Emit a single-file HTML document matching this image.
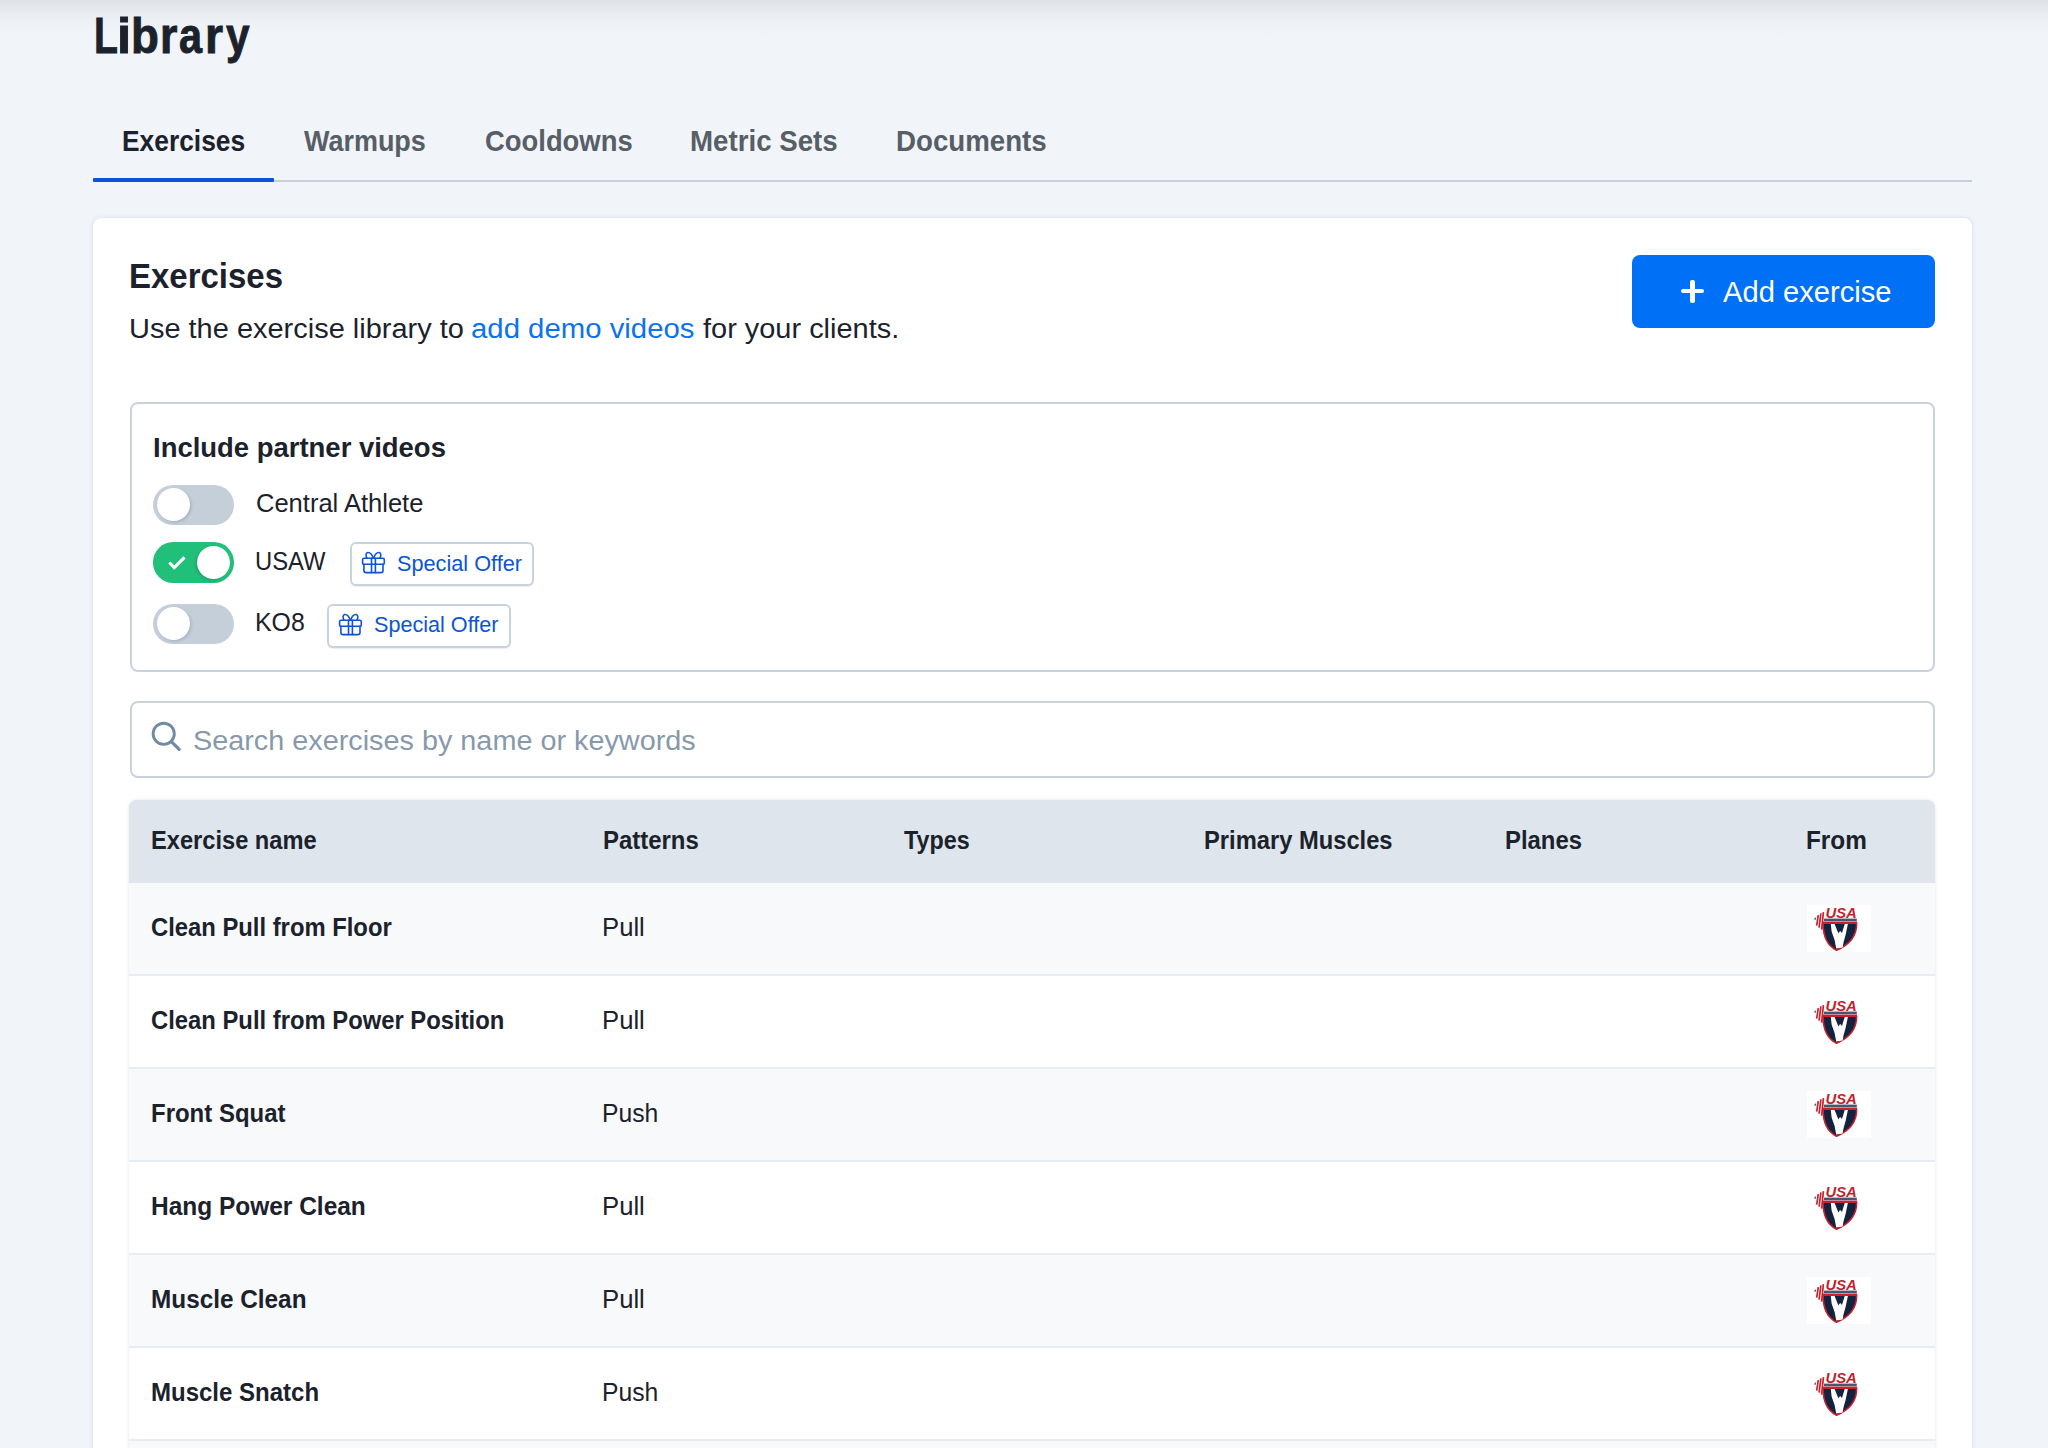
<!DOCTYPE html>
<html><head><meta charset="utf-8"><title>Library</title>
<style>
html,body{margin:0;padding:0;}
body{width:2048px;height:1448px;overflow:hidden;position:relative;
 background:linear-gradient(to bottom,#dfe2e5 0px,#e9ecf0 14px,#eef1f6 24px,#f1f4f9 36px,#f1f4f9 100%);
 font-family:"Liberation Sans",sans-serif;}
.abs{position:absolute;}
.t{position:absolute;white-space:nowrap;line-height:1;transform-origin:0 0;}
.card{background:#fff;border-radius:8px;box-shadow:0 0 1px rgba(40,50,60,0.14),0 0 5px rgba(40,50,60,0.10);}
.knob{background:#fff;border-radius:50%;box-shadow:1.5px 1.5px 3px rgba(30,40,60,0.16);}
.badge{box-sizing:border-box;border:2px solid #c9d3de;border-radius:6px;background:#fff;box-shadow:0 1px 1px rgba(30,40,60,0.08);}
.tbl{border-radius:8px;box-shadow:0 0 1px rgba(30,40,50,0.16),0 0 4px rgba(30,40,50,0.08);}
</style></head>
<body>
<div class="t" style="left:93.93px;top:11.26px;font-size:49.42px;font-weight:700;color:#1b222b;transform:scaleX(0.7926);-webkit-text-stroke:0.9px #1b222b;">L</div>
<div class="t" style="left:116.89px;top:11.26px;font-size:49.42px;font-weight:700;color:#1b222b;transform:scaleX(1.0324);-webkit-text-stroke:0.9px #1b222b;">i</div>
<div class="t" style="left:130.64px;top:11.26px;font-size:49.42px;font-weight:700;color:#1b222b;transform:scaleX(0.9236);-webkit-text-stroke:0.9px #1b222b;">b</div>
<div class="t" style="left:159.50px;top:11.26px;font-size:49.42px;font-weight:700;color:#1b222b;transform:scaleX(0.9063);-webkit-text-stroke:0.9px #1b222b;">r</div>
<div class="t" style="left:178.84px;top:11.26px;font-size:49.42px;font-weight:700;color:#1b222b;transform:scaleX(0.8387);-webkit-text-stroke:0.9px #1b222b;">a</div>
<div class="t" style="left:204.79px;top:11.26px;font-size:49.42px;font-weight:700;color:#1b222b;transform:scaleX(0.9392);-webkit-text-stroke:0.9px #1b222b;">r</div>
<div class="t" style="left:226.12px;top:11.26px;font-size:49.42px;font-weight:700;color:#1b222b;transform:scaleX(0.8572);-webkit-text-stroke:0.9px #1b222b;">y</div>
<div class="t" style="left:121.64px;top:125.57px;font-size:29.80px;font-weight:700;color:#1b222b;transform:scaleX(0.8848);">Exercises</div>
<div class="t" style="left:303.97px;top:125.57px;font-size:29.80px;font-weight:700;color:#575e66;transform:scaleX(0.9048);">Warmups</div>
<div class="t" style="left:485.18px;top:125.57px;font-size:29.80px;font-weight:700;color:#575e66;transform:scaleX(0.9196);">Cooldowns</div>
<div class="t" style="left:690.35px;top:125.57px;font-size:29.80px;font-weight:700;color:#575e66;transform:scaleX(0.9290);">Metric Sets</div>
<div class="t" style="left:895.65px;top:125.57px;font-size:29.80px;font-weight:700;color:#575e66;transform:scaleX(0.9287);">Documents</div>
<div class="abs" style="left:93px;top:180px;width:1879px;height:2px;background:#c6cfd9"></div>
<div class="abs" style="left:93px;top:178px;width:181px;height:4px;background:#0a52d6;border-radius:1px"></div>
<div class="abs card" style="left:93px;top:218px;width:1879px;height:1300px"></div>
<div class="t" style="left:129.10px;top:258.87px;font-size:35.47px;font-weight:700;color:#1b222b;transform:scaleX(0.9294);">Exercises</div>
<div class="t" style="left:129.06px;top:314.72px;font-size:27.62px;font-weight:400;color:#1b222b;transform:scaleX(1.0492);">Use the exercise library to</div>
<div class="t" style="left:471.15px;top:314.72px;font-size:27.62px;font-weight:400;color:#0d72ef;transform:scaleX(1.0626);">add demo videos</div>
<div class="t" style="left:703.29px;top:314.72px;font-size:27.62px;font-weight:400;color:#1b222b;transform:scaleX(1.0481);">for your clients.</div>
<div class="abs" style="left:1632px;top:255px;width:303px;height:73px;background:#0070f6;border-radius:8px"></div>
<div class="abs" style="left:1681px;top:288.8px;width:23px;height:4.6px;background:#fff;border-radius:2px"></div>
<div class="abs" style="left:1690.2px;top:279.6px;width:4.6px;height:23px;background:#fff;border-radius:2px"></div>
<div class="t" style="left:1722.94px;top:276.85px;font-size:29.94px;font-weight:400;color:#ffffff;transform:scaleX(0.9738);">Add exercise</div>
<div class="abs" style="left:130px;top:402px;width:1805px;height:270px;box-sizing:border-box;border:2px solid #c9d3de;border-radius:8px"></div>
<div class="t" style="left:152.66px;top:432.78px;font-size:28.49px;font-weight:700;color:#1b222b;transform:scaleX(0.9638);">Include partner videos</div>
<div class="abs" style="left:153px;top:484.5px;width:81px;height:40.5px;border-radius:20.25px;background:#c5cfda"></div><div class="abs knob" style="left:156.7px;top:487.9px;width:33.2px;height:33.2px"></div>
<div class="abs" style="left:153px;top:542px;width:81px;height:40.5px;border-radius:20.25px;background:#20c07a"></div><div class="abs knob" style="left:197.3px;top:545.6px;width:33.2px;height:33.2px;box-shadow:-1.5px 1.5px 3px rgba(20,60,40,0.2)"></div><svg class="abs" style="left:167px;top:554px" width="20" height="16" viewBox="0 0 20 16"><path d="M2.3 8.5 L7.3 13.5 L17.5 3.3" fill="none" stroke="#fff" stroke-width="3.1" stroke-linecap="butt" stroke-linejoin="miter"/></svg>
<div class="abs" style="left:153px;top:603.5px;width:81px;height:40.5px;border-radius:20.25px;background:#c5cfda"></div><div class="abs knob" style="left:156.7px;top:606.9px;width:33.2px;height:33.2px"></div>
<div class="t" style="left:256.10px;top:491.14px;font-size:25.58px;font-weight:400;color:#1b222b;transform:scaleX(0.9977);">Central Athlete</div>
<div class="t" style="left:255.26px;top:549.14px;font-size:25.58px;font-weight:400;color:#1b222b;transform:scaleX(0.9306);">USAW</div>
<div class="t" style="left:255.06px;top:610.14px;font-size:25.58px;font-weight:400;color:#1b222b;transform:scaleX(0.9734);">KO8</div>
<div class="abs badge" style="left:350.2px;top:542px;width:184px;height:44px"></div><svg class="abs" style="left:361.0px;top:550px" width="25" height="25" viewBox="0 0 25 25"><g fill="none" stroke="#0b55d4" stroke-width="1.6" stroke-linejoin="round" stroke-linecap="round"><rect x="1.6" y="8.3" width="21.7" height="6" rx="1.4"/><path d="M2.9 14.3 V20.4 Q2.9 22.6 5.1 22.6 H19.8 Q22 22.6 22 20.4 V14.3"/><path d="M10.5 8.3 V22.6 M14.4 8.3 V22.6"/><path d="M12.45 8.2 C11 4.5 8.5 2.2 6.6 2.5 C4.6 2.9 4.6 6.5 6.2 8.2"/><path d="M12.45 8.2 C13.9 4.5 16.4 2.2 18.3 2.5 C20.3 2.9 20.3 6.5 18.7 8.2"/></g></svg>
<div class="t" style="left:396.91px;top:552.85px;font-size:22.38px;font-weight:400;color:#0b55d4;transform:scaleX(0.9696);">Special Offer</div>
<div class="abs badge" style="left:327.2px;top:603.5px;width:184px;height:44px"></div><svg class="abs" style="left:338.0px;top:611.5px" width="25" height="25" viewBox="0 0 25 25"><g fill="none" stroke="#0b55d4" stroke-width="1.6" stroke-linejoin="round" stroke-linecap="round"><rect x="1.6" y="8.3" width="21.7" height="6" rx="1.4"/><path d="M2.9 14.3 V20.4 Q2.9 22.6 5.1 22.6 H19.8 Q22 22.6 22 20.4 V14.3"/><path d="M10.5 8.3 V22.6 M14.4 8.3 V22.6"/><path d="M12.45 8.2 C11 4.5 8.5 2.2 6.6 2.5 C4.6 2.9 4.6 6.5 6.2 8.2"/><path d="M12.45 8.2 C13.9 4.5 16.4 2.2 18.3 2.5 C20.3 2.9 20.3 6.5 18.7 8.2"/></g></svg>
<div class="t" style="left:374.22px;top:614.35px;font-size:22.38px;font-weight:400;color:#0b55d4;transform:scaleX(0.9657);">Special Offer</div>
<div class="abs" style="left:130px;top:700.8px;width:1805px;height:77.2px;box-sizing:border-box;border:2px solid #c9d3de;border-radius:8px"></div>
<svg class="abs" style="left:148px;top:718px" width="36" height="36" viewBox="0 0 36 36"><circle cx="15.7" cy="15.8" r="10.6" fill="none" stroke="#6f8ba6" stroke-width="2.9"/><path d="M23.6 23.8 L31.2 31.4" stroke="#6f8ba6" stroke-width="3.2" stroke-linecap="round"/></svg>
<div class="t" style="left:193.09px;top:725.60px;font-size:28.34px;font-weight:400;color:#8799ab;transform:scaleX(1.0168);">Search exercises by name or keywords</div>
<div class="abs tbl" style="left:129px;top:800px;width:1806px;height:700px"></div>
<div class="abs" style="left:129px;top:800px;width:1806px;height:83px;background:#dfe5ec;border-radius:8px 8px 0 0"></div>
<div class="t" style="left:151.02px;top:828.26px;font-size:25.44px;font-weight:700;color:#1b222b;transform:scaleX(0.9294);">Exercise name</div>
<div class="t" style="left:602.60px;top:828.26px;font-size:25.44px;font-weight:700;color:#1b222b;transform:scaleX(0.9401);">Patterns</div>
<div class="t" style="left:904.34px;top:828.26px;font-size:25.44px;font-weight:700;color:#1b222b;transform:scaleX(0.9157);">Types</div>
<div class="t" style="left:1204.41px;top:828.26px;font-size:25.44px;font-weight:700;color:#1b222b;transform:scaleX(0.9326);">Primary Muscles</div>
<div class="t" style="left:1505.30px;top:828.26px;font-size:25.44px;font-weight:700;color:#1b222b;transform:scaleX(0.9386);">Planes</div>
<div class="t" style="left:1805.97px;top:828.26px;font-size:25.44px;font-weight:700;color:#1b222b;transform:scaleX(0.9567);">From</div>
<div class="abs" style="left:129px;top:883px;width:1806px;height:93px;background:#f8f9fb"></div>
<div class="abs" style="left:129px;top:974px;width:1806px;height:2px;background:#e8edf2"></div>
<div class="t" style="left:151.42px;top:915.01px;font-size:25.15px;font-weight:700;color:#1b222b;transform:scaleX(0.9468);">Clean Pull from Floor</div>
<div class="t" style="left:601.89px;top:915.01px;font-size:25.15px;font-weight:400;color:#1b222b;transform:scaleX(1.0214);">Pull</div>
<svg class="abs" style="left:1807px;top:905px" width="64" height="47" viewBox="0 0 64 47"><rect width="64" height="47" fill="#fff"/><path d="M16.2 18.2 L49.6 18.2 C49.8 30 43 39.5 29.5 45.2 C19.5 40 16 30 16.2 18.2 Z" fill="#13223e" stroke="#c8202f" stroke-width="1.6"/><path d="M23.8 18.9 L27.6 18.9 L30.6 26.5 L31.6 28.4 Q32.6 25.6 34 26.6 L34.9 28.2 L37.7 18.9 L40.9 18.9 L38.6 30 L36.6 37 L35.6 42.6 L29.2 43.6 L27.6 35 L24.6 26.5 Z" fill="#fff"/><rect x="16" y="16.6" width="34" height="1.9" fill="#c8202f"/><rect x="17" y="13.6" width="32.8" height="2.6" fill="#1d2c4e" opacity="0.8"/><text x="18.4" y="12.9" font-family="Liberation Sans" font-weight="700" font-style="italic" font-size="14" fill="#c41f2e" textLength="31.4" lengthAdjust="spacingAndGlyphs">USA</text><path d="M9.7 20.6 L11.3 10.2 M12.1 22.6 L13.9 8.4 M14.6 24.6 L16.4 7.2" stroke="#c8202f" stroke-width="1.7" fill="none"/><path d="M7.2 14.4 L8.3 12 L9 14.4 Z" fill="#13223e"/></svg>
<div class="abs" style="left:129px;top:976px;width:1806px;height:93px;background:#ffffff"></div>
<div class="abs" style="left:129px;top:1067px;width:1806px;height:2px;background:#e8edf2"></div>
<div class="t" style="left:151.42px;top:1008.01px;font-size:25.15px;font-weight:700;color:#1b222b;transform:scaleX(0.9472);">Clean Pull from Power Position</div>
<div class="t" style="left:601.89px;top:1008.01px;font-size:25.15px;font-weight:400;color:#1b222b;transform:scaleX(1.0214);">Pull</div>
<svg class="abs" style="left:1807px;top:998px" width="64" height="47" viewBox="0 0 64 47"><rect width="64" height="47" fill="#fff"/><path d="M16.2 18.2 L49.6 18.2 C49.8 30 43 39.5 29.5 45.2 C19.5 40 16 30 16.2 18.2 Z" fill="#13223e" stroke="#c8202f" stroke-width="1.6"/><path d="M23.8 18.9 L27.6 18.9 L30.6 26.5 L31.6 28.4 Q32.6 25.6 34 26.6 L34.9 28.2 L37.7 18.9 L40.9 18.9 L38.6 30 L36.6 37 L35.6 42.6 L29.2 43.6 L27.6 35 L24.6 26.5 Z" fill="#fff"/><rect x="16" y="16.6" width="34" height="1.9" fill="#c8202f"/><rect x="17" y="13.6" width="32.8" height="2.6" fill="#1d2c4e" opacity="0.8"/><text x="18.4" y="12.9" font-family="Liberation Sans" font-weight="700" font-style="italic" font-size="14" fill="#c41f2e" textLength="31.4" lengthAdjust="spacingAndGlyphs">USA</text><path d="M9.7 20.6 L11.3 10.2 M12.1 22.6 L13.9 8.4 M14.6 24.6 L16.4 7.2" stroke="#c8202f" stroke-width="1.7" fill="none"/><path d="M7.2 14.4 L8.3 12 L9 14.4 Z" fill="#13223e"/></svg>
<div class="abs" style="left:129px;top:1069px;width:1806px;height:93px;background:#f8f9fb"></div>
<div class="abs" style="left:129px;top:1160px;width:1806px;height:2px;background:#e8edf2"></div>
<div class="t" style="left:150.80px;top:1101.01px;font-size:25.15px;font-weight:700;color:#1b222b;transform:scaleX(0.9534);">Front Squat</div>
<div class="t" style="left:601.97px;top:1101.01px;font-size:25.15px;font-weight:400;color:#1b222b;transform:scaleX(0.9829);">Push</div>
<svg class="abs" style="left:1807px;top:1091px" width="64" height="47" viewBox="0 0 64 47"><rect width="64" height="47" fill="#fff"/><path d="M16.2 18.2 L49.6 18.2 C49.8 30 43 39.5 29.5 45.2 C19.5 40 16 30 16.2 18.2 Z" fill="#13223e" stroke="#c8202f" stroke-width="1.6"/><path d="M23.8 18.9 L27.6 18.9 L30.6 26.5 L31.6 28.4 Q32.6 25.6 34 26.6 L34.9 28.2 L37.7 18.9 L40.9 18.9 L38.6 30 L36.6 37 L35.6 42.6 L29.2 43.6 L27.6 35 L24.6 26.5 Z" fill="#fff"/><rect x="16" y="16.6" width="34" height="1.9" fill="#c8202f"/><rect x="17" y="13.6" width="32.8" height="2.6" fill="#1d2c4e" opacity="0.8"/><text x="18.4" y="12.9" font-family="Liberation Sans" font-weight="700" font-style="italic" font-size="14" fill="#c41f2e" textLength="31.4" lengthAdjust="spacingAndGlyphs">USA</text><path d="M9.7 20.6 L11.3 10.2 M12.1 22.6 L13.9 8.4 M14.6 24.6 L16.4 7.2" stroke="#c8202f" stroke-width="1.7" fill="none"/><path d="M7.2 14.4 L8.3 12 L9 14.4 Z" fill="#13223e"/></svg>
<div class="abs" style="left:129px;top:1162px;width:1806px;height:93px;background:#ffffff"></div>
<div class="abs" style="left:129px;top:1253px;width:1806px;height:2px;background:#e8edf2"></div>
<div class="t" style="left:150.76px;top:1194.01px;font-size:25.15px;font-weight:700;color:#1b222b;transform:scaleX(0.9732);">Hang Power Clean</div>
<div class="t" style="left:601.89px;top:1194.01px;font-size:25.15px;font-weight:400;color:#1b222b;transform:scaleX(1.0214);">Pull</div>
<svg class="abs" style="left:1807px;top:1184px" width="64" height="47" viewBox="0 0 64 47"><rect width="64" height="47" fill="#fff"/><path d="M16.2 18.2 L49.6 18.2 C49.8 30 43 39.5 29.5 45.2 C19.5 40 16 30 16.2 18.2 Z" fill="#13223e" stroke="#c8202f" stroke-width="1.6"/><path d="M23.8 18.9 L27.6 18.9 L30.6 26.5 L31.6 28.4 Q32.6 25.6 34 26.6 L34.9 28.2 L37.7 18.9 L40.9 18.9 L38.6 30 L36.6 37 L35.6 42.6 L29.2 43.6 L27.6 35 L24.6 26.5 Z" fill="#fff"/><rect x="16" y="16.6" width="34" height="1.9" fill="#c8202f"/><rect x="17" y="13.6" width="32.8" height="2.6" fill="#1d2c4e" opacity="0.8"/><text x="18.4" y="12.9" font-family="Liberation Sans" font-weight="700" font-style="italic" font-size="14" fill="#c41f2e" textLength="31.4" lengthAdjust="spacingAndGlyphs">USA</text><path d="M9.7 20.6 L11.3 10.2 M12.1 22.6 L13.9 8.4 M14.6 24.6 L16.4 7.2" stroke="#c8202f" stroke-width="1.7" fill="none"/><path d="M7.2 14.4 L8.3 12 L9 14.4 Z" fill="#13223e"/></svg>
<div class="abs" style="left:129px;top:1255px;width:1806px;height:93px;background:#f8f9fb"></div>
<div class="abs" style="left:129px;top:1346px;width:1806px;height:2px;background:#e8edf2"></div>
<div class="t" style="left:150.77px;top:1287.01px;font-size:25.15px;font-weight:700;color:#1b222b;transform:scaleX(0.9678);">Muscle Clean</div>
<div class="t" style="left:601.89px;top:1287.01px;font-size:25.15px;font-weight:400;color:#1b222b;transform:scaleX(1.0214);">Pull</div>
<svg class="abs" style="left:1807px;top:1277px" width="64" height="47" viewBox="0 0 64 47"><rect width="64" height="47" fill="#fff"/><path d="M16.2 18.2 L49.6 18.2 C49.8 30 43 39.5 29.5 45.2 C19.5 40 16 30 16.2 18.2 Z" fill="#13223e" stroke="#c8202f" stroke-width="1.6"/><path d="M23.8 18.9 L27.6 18.9 L30.6 26.5 L31.6 28.4 Q32.6 25.6 34 26.6 L34.9 28.2 L37.7 18.9 L40.9 18.9 L38.6 30 L36.6 37 L35.6 42.6 L29.2 43.6 L27.6 35 L24.6 26.5 Z" fill="#fff"/><rect x="16" y="16.6" width="34" height="1.9" fill="#c8202f"/><rect x="17" y="13.6" width="32.8" height="2.6" fill="#1d2c4e" opacity="0.8"/><text x="18.4" y="12.9" font-family="Liberation Sans" font-weight="700" font-style="italic" font-size="14" fill="#c41f2e" textLength="31.4" lengthAdjust="spacingAndGlyphs">USA</text><path d="M9.7 20.6 L11.3 10.2 M12.1 22.6 L13.9 8.4 M14.6 24.6 L16.4 7.2" stroke="#c8202f" stroke-width="1.7" fill="none"/><path d="M7.2 14.4 L8.3 12 L9 14.4 Z" fill="#13223e"/></svg>
<div class="abs" style="left:129px;top:1348px;width:1806px;height:93px;background:#ffffff"></div>
<div class="abs" style="left:129px;top:1439px;width:1806px;height:2px;background:#e8edf2"></div>
<div class="t" style="left:150.79px;top:1380.01px;font-size:25.15px;font-weight:700;color:#1b222b;transform:scaleX(0.9547);">Muscle Snatch</div>
<div class="t" style="left:601.97px;top:1380.01px;font-size:25.15px;font-weight:400;color:#1b222b;transform:scaleX(0.9829);">Push</div>
<svg class="abs" style="left:1807px;top:1370px" width="64" height="47" viewBox="0 0 64 47"><rect width="64" height="47" fill="#fff"/><path d="M16.2 18.2 L49.6 18.2 C49.8 30 43 39.5 29.5 45.2 C19.5 40 16 30 16.2 18.2 Z" fill="#13223e" stroke="#c8202f" stroke-width="1.6"/><path d="M23.8 18.9 L27.6 18.9 L30.6 26.5 L31.6 28.4 Q32.6 25.6 34 26.6 L34.9 28.2 L37.7 18.9 L40.9 18.9 L38.6 30 L36.6 37 L35.6 42.6 L29.2 43.6 L27.6 35 L24.6 26.5 Z" fill="#fff"/><rect x="16" y="16.6" width="34" height="1.9" fill="#c8202f"/><rect x="17" y="13.6" width="32.8" height="2.6" fill="#1d2c4e" opacity="0.8"/><text x="18.4" y="12.9" font-family="Liberation Sans" font-weight="700" font-style="italic" font-size="14" fill="#c41f2e" textLength="31.4" lengthAdjust="spacingAndGlyphs">USA</text><path d="M9.7 20.6 L11.3 10.2 M12.1 22.6 L13.9 8.4 M14.6 24.6 L16.4 7.2" stroke="#c8202f" stroke-width="1.7" fill="none"/><path d="M7.2 14.4 L8.3 12 L9 14.4 Z" fill="#13223e"/></svg>
<div class="abs" style="left:129px;top:1441px;width:1806px;height:93px;background:#f8f9fb"></div>
<div class="abs" style="left:129px;top:1532px;width:1806px;height:2px;background:#e8edf2"></div>
<svg class="abs" style="left:1807px;top:1463px" width="64" height="47" viewBox="0 0 64 47"><rect width="64" height="47" fill="#fff"/><path d="M16.2 18.2 L49.6 18.2 C49.8 30 43 39.5 29.5 45.2 C19.5 40 16 30 16.2 18.2 Z" fill="#13223e" stroke="#c8202f" stroke-width="1.6"/><path d="M23.8 18.9 L27.6 18.9 L30.6 26.5 L31.6 28.4 Q32.6 25.6 34 26.6 L34.9 28.2 L37.7 18.9 L40.9 18.9 L38.6 30 L36.6 37 L35.6 42.6 L29.2 43.6 L27.6 35 L24.6 26.5 Z" fill="#fff"/><rect x="16" y="16.6" width="34" height="1.9" fill="#c8202f"/><rect x="17" y="13.6" width="32.8" height="2.6" fill="#1d2c4e" opacity="0.8"/><text x="18.4" y="12.9" font-family="Liberation Sans" font-weight="700" font-style="italic" font-size="14" fill="#c41f2e" textLength="31.4" lengthAdjust="spacingAndGlyphs">USA</text><path d="M9.7 20.6 L11.3 10.2 M12.1 22.6 L13.9 8.4 M14.6 24.6 L16.4 7.2" stroke="#c8202f" stroke-width="1.7" fill="none"/><path d="M7.2 14.4 L8.3 12 L9 14.4 Z" fill="#13223e"/></svg>
</body></html>
